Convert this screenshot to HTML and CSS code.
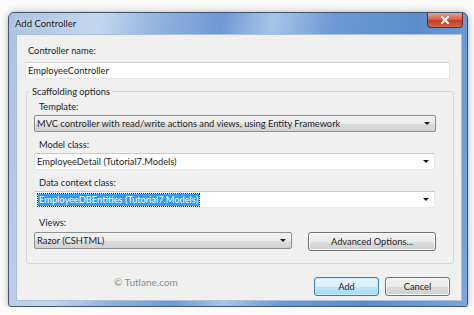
FILE: index.html
```html
<!DOCTYPE html>
<html>
<head>
<meta charset="utf-8">
<link rel="stylesheet" href="styles.css">
</head>
<body>
<div class="window">
  <div class="titlebar">
    <span class="title">Add Controller</span>
    <span class="close"><svg width="10" height="8" viewBox="0 0 10 8"><path d="M2 1 L8 7 M8 1 L2 7" stroke="#fff" stroke-width="2" stroke-linecap="square"/></svg></span>
  </div>
  <div class="client">
    <div class="label first">Controller name:</div>
    <div class="input">EmployeeController</div>
    <div class="group">
      <div class="legend">Scaffolding options</div>
      <div class="label top">Template:</div>
      <div class="select combo">MVC controller with read/write actions and views, using Entity Framework<span class="arrow"></span></div>
      <div class="label">Model class:</div>
      <div class="select edit">EmployeeDetail (Tutorial7.Models)<span class="arrow"></span></div>
      <div class="label">Data context class:</div>
      <div class="select edit"><span class="sel">EmployeeDBEntities (Tutorial7.Models)</span><span class="arrow"></span></div>
      <div class="label views-label">Views:</div>
      <div class="row">
        <div class="select combo views">Razor (CSHTML)<span class="arrow"></span></div>
        <div class="button adv">Advanced Options...</div>
      </div>
    </div>
    <div class="footer">
      <div class="copy">© Tutlane.com</div>
      <div class="buttons">
        <div class="button default">Add</div>
        <div class="button">Cancel</div>
      </div>
    </div>
  </div>
</div>
</body>
</html>
```
FILE: styles.css
```css
html, body {
  margin: 0;
  padding: 0;
  background: #fbfbfb;
}
body {
  font-family: Lato, "Open Sans", sans-serif;
  font-size: 9.3px;
  color: #1e1e1e;
}
.window {
  margin: 12px 6px 0 8px;
  height: 295px;
  box-sizing: border-box;
  border: 1px solid #3e5472;
  border-radius: 6px 6px 3px 3px;
  background: linear-gradient(100deg, #a9c3e2 0%, #c3d6ee 18%, #8fb2de 30%, #6d9ad3 42%, #a6c4ea 52%, #6c9ad4 64%, #5a8ccd 80%, #7aa6db 100%);
  padding: 0 5px 5px 7px;
  display: flex;
  flex-direction: column;
  box-shadow: 0 0 7px rgba(0,0,0,0.3);
}
.titlebar {
  height: 21px;
  display: flex;
  align-items: flex-start;
  justify-content: space-between;
}
.title {
  font-size: 9.5px;
  color: #161616;
  margin: 5px 0 0 -1px;
  text-shadow: 0 0 5px rgba(255,255,255,0.9);
}
.close {
  width: 36px;
  height: 15px;
  margin-right: -1px;
  box-sizing: border-box;
  border: 1px solid #6e2a22;
  border-top: none;
  border-radius: 0 0 4px 4px;
  background: linear-gradient(#e8a393 0%, #d86049 45%, #c23c24 55%, #d2664c 100%);
  display: flex;
  align-items: center;
  justify-content: center;
}
.client {
  flex: 1;
  background: #f0f0f0;
  border: 1px solid #a9c1df;
  padding: 9px 7px 0 8px;
  display: flex;
  flex-direction: column;
}
.label {
  height: 13px;
  line-height: 13px;
  margin: 6px 0 2px 5px;
}
.label.first {
  margin: 0 0 5px 3px;
}
.label.top {
  margin-top: 2px;
}
.label.views-label {
  margin-top: 8px;
  margin-bottom: 3px;
}
.input {
  height: 17px;
  line-height: 15px;
  box-sizing: border-box;
  background: #fff;
  border: 1px solid #e6e6e6;
  border-top-color: #d2d2d2;
  padding-left: 2px;
  margin-right: 4px;
}
.group {
  margin: 12px 0 0 1px;
  border: 1px solid #d8d8d8;
  border-radius: 3px;
  padding: 0 17px 12px 7px;
}
.legend {
  margin: -7px 0 0 -4px;
  padding: 0 2px;
  background: #f0f0f0;
  width: max-content;
  height: 13px;
  line-height: 13px;
}
.select {
  height: 17px;
  line-height: 15px;
  box-sizing: border-box;
  position: relative;
  padding-left: 2px;
}
.select.combo {
  border: 1px solid #8e8f8f;
  border-radius: 2px;
  background: linear-gradient(#f3f3f3 0%, #ebebeb 50%, #dddddd 51%, #d2d2d2 100%);
}
.select.edit {
  background: #fff;
  border: 1px solid #e3e9ef;
  border-top-color: #c3cad3;
  margin-right: 1px;
}
.arrow {
  position: absolute;
  right: 5px;
  top: 6px;
  width: 0;
  height: 0;
  border-left: 3px solid transparent;
  border-right: 3px solid transparent;
  border-top: 3px solid #1a1a1a;
}
.sel {
  display: inline-block;
  height: 12px;
  line-height: 12px;
  margin-top: 1px;
  background: #3399ff;
  color: #fff;
  outline: 1px dotted #222;
  padding: 0 1px;
  margin-left: 1px;
}
.row {
  display: flex;
  gap: 16px;
}
.views {
  width: 258px;
}
.button {
  height: 19px;
  box-sizing: border-box;
  border: 1px solid #707070;
  border-radius: 3px;
  background: linear-gradient(#f2f2f2 0%, #ebebeb 50%, #dddddd 51%, #cfcfcf 100%);
  box-shadow: inset 0 0 0 1px #fbfbfb;
  display: flex;
  align-items: center;
  justify-content: center;
}
.adv {
  width: 128px;
}
.footer {
  display: flex;
  align-items: center;
  margin-top: 13px;
}
.copy {
  color: #8c8c8c;
  font-size: 10px;
  margin-left: 89px;
  margin-top: -9px;
}
.buttons {
  margin-left: auto;
  margin-right: 4px;
  display: flex;
  gap: 6px;
}
.buttons .button {
  width: 65px;
}
.button.default {
  border-color: #3c7fb1;
  background: linear-gradient(#eaf6fd 0%, #d9f0fc 50%, #bee6fd 51%, #a7d9f5 100%);
  box-shadow: inset 0 0 0 1px #c7ebfc;
}
```
